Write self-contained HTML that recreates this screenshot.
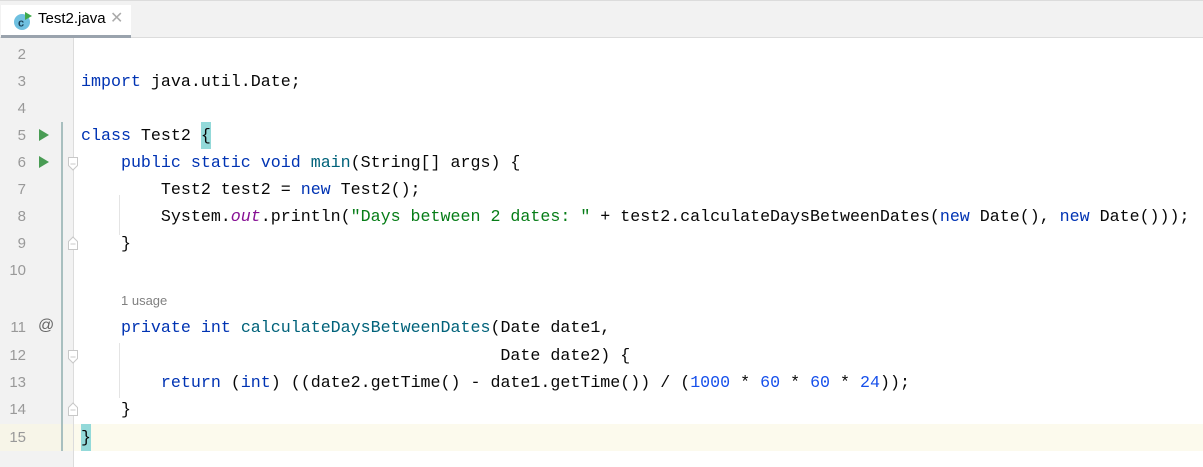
<!DOCTYPE html>
<html><head><meta charset="utf-8"><style>
body{margin:0;width:1203px;height:467px;overflow:hidden;background:#fff;position:relative;font-family:"Liberation Mono",monospace;}
#tabbar{position:absolute;left:0;top:0;width:1203px;height:38px;background:#f2f2f2;border-top:1px solid #dcdcdc;box-sizing:border-box;border-bottom:1px solid #dcdcdc}
#tab{position:absolute;left:1px;top:5px;width:130px;height:30px;background:#fff;}
#tabline{position:absolute;left:1px;top:35px;width:130px;height:3px;background:#9aa3ad}
#tab .t{position:absolute;left:37px;top:5px;font:15px "Liberation Sans",sans-serif;color:#000}
#tab .x{position:absolute;left:109px;top:3px;font:16px "Liberation Sans",sans-serif;color:#aaa}
#gutter{position:absolute;left:0;top:38px;width:73px;height:429px;background:#f2f2f2;border-right:1px solid #dcdcdc}
.ln{position:absolute;left:0;width:26px;text-align:right;font:15px "Liberation Sans",sans-serif;color:#999;line-height:27px}
.c{position:absolute;left:81px;font-size:16.65px;line-height:27px;white-space:pre;color:#080808}
.k{color:#0033b3}.m{color:#00627a}.s{color:#067d17}.f{color:#871094;font-style:italic}.n{color:#1750eb}
.br{background:#93d9d9;display:inline-block;height:27px}
</style></head><body>
<div id="tabbar"></div>
<div id="tab">
<svg style="position:absolute;left:12px;top:6px" width="20" height="20"><circle cx="9" cy="11" r="8" fill="#6fc0e0"/><text x="5" y="15.5" font-family="Liberation Sans" font-size="11" font-weight="bold" fill="#1a3f55">c</text><polygon points="12,1 19,5 12,9" fill="#3ea84a"/></svg>
<span class="t">Test2.java</span><span class="x">✕</span></div>
<div id="tabline"></div>
<div id="gutter"></div>
<div style="position:absolute;left:0;top:424px;width:73px;height:27px;background:#f7f5e8"></div>
<div style="position:absolute;left:74px;top:424px;width:1129px;height:27px;background:#fcfaed"></div>
<div style="position:absolute;left:61px;top:122px;width:2px;height:329px;background:#a8bfbf"></div>
<div style="position:absolute;left:119px;top:195px;width:1px;height:40px;background:#e4e4e4"></div>
<div style="position:absolute;left:119px;top:343px;width:1px;height:55px;background:#e4e4e4"></div>
<div class="ln" style="top:41px">2</div>
<div class="ln" style="top:68px">3</div>
<div class="ln" style="top:95px">4</div>
<div class="ln" style="top:122px">5</div>
<div class="ln" style="top:149px">6</div>
<div class="ln" style="top:176px">7</div>
<div class="ln" style="top:203px">8</div>
<div class="ln" style="top:230px">9</div>
<div class="ln" style="top:257px">10</div>
<div class="ln" style="top:314px">11</div>
<div class="ln" style="top:342px">12</div>
<div class="ln" style="top:369px">13</div>
<div class="ln" style="top:396px">14</div>
<div class="ln" style="top:424px">15</div>
<svg style="position:absolute;left:38px;top:128px" width="12" height="14"><polygon points="1,1 11,7 1,13" fill="#499c54"/></svg>
<svg style="position:absolute;left:38px;top:155px" width="12" height="14"><polygon points="1,1 11,7 1,13" fill="#499c54"/></svg>
<div style="position:absolute;left:38px;top:317px;font:16px 'Liberation Sans',sans-serif;color:#666">@</div>
<svg style="position:absolute;left:67px;top:156px" width="12" height="16"><path d="M1.5 1.5h9v8l-4.5 4.5l-4.5-4.5z M3.5 8h5" fill="#fff" stroke="#c8c8c8"/></svg>
<svg style="position:absolute;left:67px;top:349px" width="12" height="16"><path d="M1.5 1.5h9v8l-4.5 4.5l-4.5-4.5z M3.5 8h5" fill="#fff" stroke="#c8c8c8"/></svg>
<svg style="position:absolute;left:67px;top:235px" width="12" height="16"><path d="M1.5 14.5h9v-8l-4.5-4.5l-4.5 4.5z M3.5 9h5" fill="#fff" stroke="#c8c8c8"/></svg>
<svg style="position:absolute;left:67px;top:401px" width="12" height="16"><path d="M1.5 14.5h9v-8l-4.5-4.5l-4.5 4.5z M3.5 9h5" fill="#fff" stroke="#c8c8c8"/></svg>
<div class="c" style="top:68px"><span class="k">import</span> java.util.Date;</div>
<div class="c" style="top:122px"><span class="k">class</span> Test2 <span class="br">{</span></div>
<div class="c" style="top:149px">    <span class="k">public static void</span> <span class="m">main</span>(String[] args) {</div>
<div class="c" style="top:176px">        Test2 test2 = <span class="k">new</span> Test2();</div>
<div class="c" style="top:203px">        System.<span class="f">out</span>.println(<span class="s">"Days between 2 dates: "</span> + test2.calculateDaysBetweenDates(<span class="k">new</span> Date(), <span class="k">new</span> Date()));</div>
<div class="c" style="top:230px">    }</div>
<div style="position:absolute;left:121px;top:293px;font:13px 'Liberation Sans',sans-serif;color:#808080">1 usage</div>
<div class="c" style="top:314px">    <span class="k">private int</span> <span class="m">calculateDaysBetweenDates</span>(Date date1,</div>
<div class="c" style="top:342px">                                          Date date2) {</div>
<div class="c" style="top:369px">        <span class="k">return</span> (<span class="k">int</span>) ((date2.getTime() - date1.getTime()) / (<span class="n">1000</span> * <span class="n">60</span> * <span class="n">60</span> * <span class="n">24</span>));</div>
<div class="c" style="top:396px">    }</div>
<div class="c" style="top:424px"><span class="br">}</span></div>
</body></html>
